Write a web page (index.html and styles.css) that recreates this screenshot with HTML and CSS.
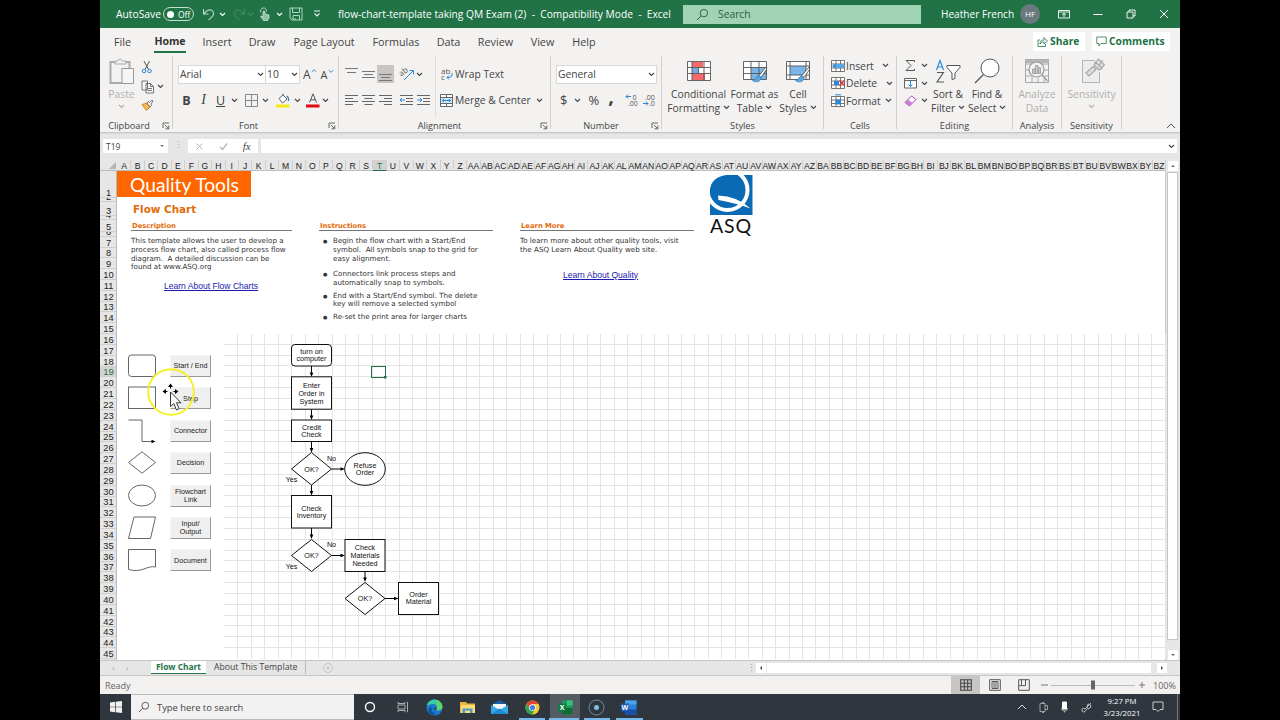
FILE: index.html
```html
<!DOCTYPE html>
<html lang="en">
<head>
  <meta charset="UTF-8">
  <meta name="viewport" content="width=device-width, initial-scale=1.0">
  <title>flow-chart-template taking QM Exam (2) - Excel</title>
  <link rel="stylesheet" href="styles.css">
</head>
<body>
  <svg class="defs" width="0" height="0">
    <symbol id="chev" viewBox="0 0 7 5"><path d="M1 1l2.500 2.500L6 1" fill="none" stroke="currentColor" stroke-width="1.100"/></symbol>
    <symbol id="launch" viewBox="0 0 8 8"><path d="M1 6V1h6M3 3l3.500 3.500M6.800 3.500v3.300H3.500" fill="none" stroke="#555" stroke-width=".9"/></symbol>
    <symbol id="lens" viewBox="0 0 14 14"><circle cx="8.500" cy="5.500" r="4" fill="none" stroke="currentColor"/><path d="M5.500 8.500L1 13" stroke="currentColor"/></symbol>
    <symbol id="brush" viewBox="0 0 16 18"><path d="M15.500 1L8.500 9.500l2 2L16.300 3z" fill="#fff" stroke="#444" stroke-width=".8"/><path d="M8.200 9.800c-3 .3-2.500 4-6.200 4.700 3 2.500 8.500 1.500 8.500-2.700z" fill="#5ba7e0" stroke="#2b7cc0" stroke-width=".7"/></symbol>
  </svg>

  <div class="screen">
    <!-- Title bar -->
    <div class="titlebar">
      <span class="autosave">AutoSave</span>
      <span class="toggle"><i></i>Off</span>
      <svg class="undo" width="14" height="14" viewBox="0 0 14 14"><path d="M1.500 2v5h5M1.800 6.800C5 2.500 9 1.800 11 4.500c2 3-1 5.500-4.500 8.500" fill="none" stroke="#b9ddc8" stroke-width="1.100"/></svg>
      <svg class="chev c1"><use href="#chev"/></svg>
      <svg class="redo" width="14" height="14" viewBox="0 0 14 14"><path d="M12.500 2v5h-5M12.200 6.800C9 2.500 5 1.800 3 4.500c-2 3 1 5.500 4.500 8.500" fill="none" stroke="#3f8a60" stroke-width="1.100"/></svg>
      <svg class="chev c2"><use href="#chev"/></svg>
      <svg class="touch" width="12" height="14" viewBox="0 0 12 14"><path d="M2 5.500a3 3 0 1 1 5.500-1" fill="none" stroke="#a9d3ba"/><path d="M4 9V4.500q1-1.200 2 0V7l4 1v3l-1.500 2.500h-4L1.500 9.500q1-1 2.500.5z" fill="#8bc2a1" stroke="#d5eadd" stroke-width=".7"/></svg>
      <svg class="chev c3"><use href="#chev"/></svg>
      <svg class="save" width="14" height="14" viewBox="0 0 14 14"><path d="M1 1h12v12H3l-2-2zM3.500 1v4.500h7V1M4 13V8.500h6.500V13M6 11v2" fill="none" stroke="#a9d9bb"/></svg>
      <svg class="more" width="8" height="8" viewBox="0 0 8 8"><path d="M1 1h6M1.500 3.500L4 6l2.500-2.500" fill="none" stroke="#e5f3ea" stroke-width="1.100"/></svg>
      <span class="doc-title">flow-chart-template taking QM Exam (2)&nbsp; -&nbsp; Compatibility Mode&nbsp; -&nbsp; Excel</span>
      <div class="search"><svg width="13" height="13"><use href="#lens"/></svg>Search</div>
      <span class="user">Heather French</span>
      <span class="avatar">HF</span>
      <svg class="win w1" width="12" height="10" viewBox="0 0 12 10"><path d="M.5 1.500h11v7.500H.5zM.5 3h11M6 8V4.500M4 6l2-1.700L8 6" fill="none" stroke="#fff" stroke-width=".9"/></svg>
      <svg class="win w2" width="10" height="10" viewBox="0 0 10 10"><path d="M.5 5.500h9" stroke="#fff"/></svg>
      <svg class="win w3" width="10" height="10" viewBox="0 0 10 10"><path d="M1 3h6v6H1zM3 3V1h6v6H7" fill="none" stroke="#fff" stroke-width=".9"/></svg>
      <svg class="win w4" width="10" height="10" viewBox="0 0 10 10"><path d="M1 1l8 8M9 1L1 9" stroke="#fff"/></svg>
    </div>

    <!-- Ribbon tabs -->
    <div class="tabs">
      <span>File</span><span class="active"><b>Home</b></span><span>Insert</span><span>Draw</span><span>Page Layout</span>
      <span>Formulas</span><span>Data</span><span>Review</span><span>View</span><span>Help</span>
      <div class="tab-btn share"><svg width="11" height="11" viewBox="0 0 11 11"><path d="M3 4H1v6.500h7.500V8M3 8c0-3 1.500-4 4-4V1.500L10.500 5 7 8V6C5 6 4 6.500 3 8z" fill="none" stroke="#217346" stroke-width=".8"/></svg>Share</div>
      <div class="tab-btn comments"><svg width="11" height="11" viewBox="0 0 11 11"><path d="M.8 1h9.400v6.500H5L2.800 10V7.500h-2z" fill="none" stroke="#217346" stroke-width=".8"/></svg>Comments</div>
    </div>

    <!-- Ribbon -->
    <div class="ribbon">
      <div class="group g-clip">
        <div class="body">
          <div class="big disabled paste">
            <svg width="26" height="28" viewBox="0 0 26 28"><path d="M6 4H1.500v21H13M17 4h3.500v6" fill="none" stroke="#aaa" stroke-width="2"/><path d="M6 6V3h3q2-4 4 0h4v3z" fill="#f3f2f1" stroke="#aaa"/><path d="M13 10.500h11.500v15H13z" fill="#f5f5f5" stroke="#999"/></svg>
            <span>Paste</span><svg class="chev"><use href="#chev"/></svg>
          </div>
          <div class="stack clip-stack">
            <svg width="12" height="14" viewBox="0 0 12 14"><path d="M3 1l4.500 8.500M8.500 1L4 9.500" stroke="#555" fill="none"/><circle cx="3" cy="11" r="1.800" fill="none" stroke="#2b88d8"/><circle cx="8.500" cy="11" r="1.800" fill="none" stroke="#2b88d8"/></svg>
            <div><svg width="14" height="14" viewBox="0 0 14 14"><path d="M1 1h5.500v9H1zM5 3.500h4.500l3 3V13H5zM9.500 3.500v3h3M7 8.500h4M7 10.500h4" fill="#f8f8f8" stroke="#666" stroke-width=".9"/></svg><svg class="chev"><use href="#chev"/></svg></div>
            <svg width="13" height="12" viewBox="0 0 13 12"><path d="M1 5.500l5-1.500 3 4-3.500 3.500z" fill="#f5b95c" stroke="#d98a1e"/><path d="M6 4l1-1.500 1.500 1L11 1l1 1-2 3 .5 1.500L9 8z" fill="#fff" stroke="#555" stroke-width=".8"/></svg>
          </div>
        </div>
        <div class="label"><span>Clipboard</span><svg class="launch"><use href="#launch"/></svg></div>
      </div>

      <div class="group g-font">
        <div class="rows">
          <div class="row">
            <div class="combo font-name">Arial<svg class="chev"><use href="#chev"/></svg></div>
            <div class="combo font-size">10<svg class="chev"><use href="#chev"/></svg></div>
            <span class="grow">A<svg class="chev up"><use href="#chev"/></svg></span>
            <span class="shrink">A<svg class="chev"><use href="#chev"/></svg></span>
          </div>
          <div class="row font-row">
            <b>B</b><i>I</i><u>U</u><svg class="chev"><use href="#chev"/></svg>
            <svg class="ml" width="13" height="13" viewBox="0 0 13 13"><path d="M.5.5h12v12H.5zM6.500.5v12M.5 6.500h12" fill="none" stroke="#888"/></svg><svg class="chev"><use href="#chev"/></svg>
            <svg class="ml fill" width="14" height="15" viewBox="0 0 14 15"><path d="M3 5.500L7 2l4 4-4.500 4zM7 2V.5" fill="#fff" stroke="#666"/><path d="M10.500 3q2.500 1 2 5" stroke="#2b7cc0" fill="none" stroke-width="1.300"/><path d="M0 11.500h13.500v3H0z" fill="#f5ea14"/></svg><svg class="chev"><use href="#chev"/></svg>
            <svg class="ml2" width="14" height="15" viewBox="0 0 14 15"><path d="M3.500 9.500L7 .8l3.500 8.700M4.700 6.800h4.600" stroke="#555" fill="none"/><path d="M0 11.500h13.500v3H0z" fill="#e00b0b"/></svg><svg class="chev"><use href="#chev"/></svg>
          </div>
        </div>
        <div class="label"><span>Font</span><svg class="launch"><use href="#launch"/></svg></div>
      </div>

      <div class="group g-align">
        <div class="align-body">
          <div class="rows align-left">
            <div class="row">
              <svg class="ab" viewBox="0 0 17 18"><path d="M2 3.500h13M4 7.500h9" stroke="#777" fill="none"/></svg>
              <svg class="ab" viewBox="0 0 17 18"><path d="M2 6.500h13M4 9.500h9M2 12.500h13" stroke="#777"/></svg>
              <svg class="ab on" viewBox="0 0 17 18"><path d="M2 9.500h13M4 12.500h9M2 15.500h13" stroke="#777"/></svg>
              <svg class="orient" width="16" height="16" viewBox="0 0 16 16"><path d="M5 14L14 5M10.500 4.500h4v4" stroke="#2b88d8" fill="none"/><text x="1" y="9" font-size="8" transform="rotate(-38 4 8)">ab</text></svg>
              <svg class="chev"><use href="#chev"/></svg>
            </div>
            <div class="row">
              <svg class="ab" viewBox="0 0 17 18"><path d="M2 4.500h13M2 7.500h8M2 10.500h13M2 13.500h8" stroke="#666"/></svg>
              <svg class="ab" viewBox="0 0 17 18"><path d="M2 4.500h13M4.500 7.500h8M2 10.500h13M4.500 13.500h8" stroke="#666"/></svg>
              <svg class="ab" viewBox="0 0 17 18"><path d="M2 4.500h13M7 7.500h8M2 10.500h13M7 13.500h8" stroke="#666"/></svg>
              <svg class="ab ind" viewBox="0 0 17 18"><path d="M2 4.500h13M8 7.500h7M8 10.500h7M2 13.500h13" stroke="#666"/><path d="M7 9H2m2-2L2 9l2 2" stroke="#2b88d8" fill="none"/></svg>
              <svg class="ab" viewBox="0 0 17 18"><path d="M2 4.500h13M8 7.500h7M8 10.500h7M2 13.500h13" stroke="#666"/><path d="M2 9h5m-2-2l2 2-2 2" stroke="#2b88d8" fill="none"/></svg>
            </div>
          </div>
          <div class="rows align-right">
            <div class="row"><svg class="wrap" width="13" height="14" viewBox="0 0 13 14"><text x="1" y="7" font-size="8">ab</text><text x="1" y="13" font-size="8">c</text><path d="M12 6q1 5-5 4.500m2-2l-2 2 2 2" stroke="#2b88d8" fill="none"/></svg>Wrap Text</div>
            <div class="row"><svg width="13" height="13" viewBox="0 0 13 13"><path d="M.5.5h12v12H.5zM.5 3.500h12M.5 9.500h12M6.500.5v3M6.500 9.500v3" fill="#fff" stroke="#666"/><path d="M1 4h11v5H1z" fill="#cfe6f8"/><path d="M2 6.500h9M4 5L2.500 6.500 4 8M9 5l1.500 1.500L9 8" fill="none" stroke="#2b88d8"/></svg>Merge &amp; Center<svg class="chev"><use href="#chev"/></svg></div>
          </div>
        </div>
        <div class="label"><span>Alignment</span><svg class="launch"><use href="#launch"/></svg></div>
      </div>

      <div class="group g-num">
        <div class="rows">
          <div class="row"><div class="combo general">General<svg class="chev"><use href="#chev"/></svg></div></div>
          <div class="row num-row">
            <span>$</span><svg class="chev"><use href="#chev"/></svg><span>%</span><span class="comma">,</span>
            <svg width="14" height="14" viewBox="0 0 14 14"><text x="7.500" y="6.500" font-size="7">0</text><text x="3" y="13" font-size="7">.00</text><path d="M6 3.500H1m2-2l-2 2 2 2" stroke="#2b88d8" fill="none"/></svg>
            <svg width="14" height="14" viewBox="0 0 14 14"><text x="3" y="6.500" font-size="7">.00</text><text x="7" y="13" font-size="7">.0</text><path d="M1 10.500h5m-2-2l2 2-2 2" stroke="#2b88d8" fill="none"/></svg>
          </div>
        </div>
        <div class="label"><span>Number</span><svg class="launch"><use href="#launch"/></svg></div>
      </div>

      <div class="group g-styles">
        <div class="body">
          <div class="big cond">
            <svg width="26" height="26" viewBox="0 0 26 26"><path d="M1.500 3.500h23v19h-23z" fill="#fff"/><path d="M6 4h11v5.500H6zM6 16h13v6H6z" fill="#f5696b"/><path d="M6 10h6v5.500H6z" fill="#71aee6"/><path d="M1.500 3.500h23v19h-23zM1.500 9.500h23M1.500 15.500h23M6 3.500v19M12.500 9.500v6M18 3.500v19" fill="none" stroke="#555" stroke-width=".9"/></svg>
            <span>Conditional<br>Formatting <svg class="chev"><use href="#chev"/></svg></span>
          </div>
          <div class="big fmt">
            <svg width="26" height="26" viewBox="0 0 26 26"><path d="M1.500 3.500h23v18h-23z" fill="#fff"/><path d="M9 9.500h15.500v12H9z" fill="#7ab6ea"/><path d="M1.500 3.500h23v18h-23zM1.500 9.500h23M1.500 15.500h23M9 3.500v18M17 3.500v18" fill="none" stroke="#555" stroke-width=".9"/><use href="#brush" x="7" y="8" width="19" height="18"/></svg>
            <span>Format as<br>Table <svg class="chev"><use href="#chev"/></svg></span>
          </div>
          <div class="big cell">
            <svg width="26" height="26" viewBox="0 0 26 26"><path d="M1.500 3.500h23v18h-23z" fill="#fff"/><path d="M5 8h16v9H5z" fill="#7ab6ea"/><path d="M1.500 3.500h23v18h-23zM1.500 8h23M1.500 17h23M5 3.500v18M21 3.500v18" fill="none" stroke="#555" stroke-width=".9"/><use href="#brush" x="7" y="8" width="19" height="18"/></svg>
            <span>Cell<br>Styles <svg class="chev"><use href="#chev"/></svg></span>
          </div>
        </div>
        <div class="label"><span>Styles</span></div>
      </div>

      <div class="group g-cells">
        <div class="stack">
          <div><svg width="14" height="12" viewBox="0 0 14 12"><path d="M.5.5h13v11H.5zM.5 4h13M.5 8h13M5 .5v11M9.500.5v11" fill="#fff" stroke="#666" stroke-width=".9"/><path d="M3 4h10.500v4H3z" fill="#58a7e4"/><path d="M4.500 3.500L1 6l3.500 2.500" fill="#2b88d8"/></svg>Insert<svg class="chev"><use href="#chev"/></svg></div>
          <div><svg width="14" height="12" viewBox="0 0 14 12"><path d="M.5.5h13v11H.5zM.5 4h13M.5 8h13M5 .5v11M9.500.5v11" fill="#fff" stroke="#666" stroke-width=".9"/><path d="M3 4h5v4H3z" fill="#2b88d8"/><path d="M8.500 3.500l5 5M13.500 3.500l-5 5" stroke="#d13438" stroke-width="1.200"/></svg>Delete<svg class="chev far"><use href="#chev"/></svg></div>
          <div><svg width="14" height="13" viewBox="0 0 14 13"><path d="M.5 2.500h13v10H.5zM.5 6h13M.5 9.500h13M5 2.500v10M9.500 2.500v10" fill="#fff" stroke="#666" stroke-width=".9"/><path d="M4.500 5.500h5.500v5H4.500z" fill="#2b88d8"/><path d="M4 .8h6" stroke="#2b88d8"/></svg>Format<svg class="chev near"><use href="#chev"/></svg></div>
        </div>
        <div class="label"><span>Cells</span></div>
      </div>

      <div class="group g-edit">
        <div class="body">
          <div class="stack edit-stack">
            <div><svg width="13" height="13" viewBox="0 0 13 13"><path d="M10.500 3V1.500H2L7 6.500 2 11.500h8.500V10" fill="none" stroke="#555"/></svg><svg class="chev"><use href="#chev"/></svg></div>
            <div><svg width="13" height="12" viewBox="0 0 13 12"><path d="M.5 1.500h12v9.500H.5zM.5 3.500h12" fill="#fff" stroke="#666"/><path d="M6.500 4v5.500m-2-2l2 2 2-2" fill="none" stroke="#2b88d8"/></svg><svg class="chev"><use href="#chev"/></svg></div>
            <div><svg width="13" height="12" viewBox="0 0 13 12"><path d="M1 7.500L7.500 1l4.500 3.500L5.500 11z" fill="#fff" stroke="#a33fb5"/><path d="M1 7.500L4 4.500l4.500 3.500-3 3z" fill="#c97fd4"/></svg><svg class="chev"><use href="#chev"/></svg></div>
          </div>
          <div class="big sort">
            <svg width="26" height="26" viewBox="0 0 26 26"><path d="M1.500 12L5 2.500 8.500 12M2.700 9h4.700" fill="none" stroke="#2b88d8" stroke-width="1.200"/><path d="M2 14.500h6.500L2 24h7" fill="none" stroke="#555" stroke-width="1.100"/><path d="M12 7.500h13v2l-5 5.500v5.500l-3 1V15l-5-5.500z" fill="#fff" stroke="#555"/></svg>
            <span>Sort &amp;<br>Filter <svg class="chev"><use href="#chev"/></svg></span>
          </div>
          <div class="big find">
            <svg width="26" height="26" viewBox="0 0 26 26"><circle cx="16" cy="10" r="9" fill="#fff" stroke="#555"/><path d="M9.500 16.500L1 25" stroke="#555" stroke-width="1.200"/></svg>
            <span>Find &amp;<br>Select <svg class="chev"><use href="#chev"/></svg></span>
          </div>
        </div>
        <div class="label"><span>Editing</span></div>
      </div>

      <div class="group g-analysis">
        <div class="body centered">
          <div class="big disabled">
            <svg width="26" height="26" viewBox="0 0 26 26"><path d="M1.500 1.500h23v23h-23zM1.500 6h23M1.500 12h4M1.500 18h6M20 12h4.500M20 18h4.500M8 19v5M14 20v4M20 21v3" fill="none" stroke="#a6a6a6"/><path d="M1.500 1.500h23V5h-23z" fill="#b5b5b5"/><circle cx="12.500" cy="11.500" r="7.500" fill="#f3f2f1" stroke="#999" stroke-width="1.200"/><path d="M8.500 11h2.500v4.500H8.500zM11.500 7.500H14v8h-2.500zM14.500 9.500h2v6h-2z" fill="#ccc" stroke="#999" stroke-width=".8"/><path d="M18 17l5.500 6" stroke="#999" stroke-width="1.500"/></svg>
            <span>Analyze<br>Data</span>
          </div>
        </div>
        <div class="label"><span>Analysis</span></div>
      </div>

      <div class="group g-sens">
        <div class="body centered">
          <div class="big disabled">
            <svg width="26" height="26" viewBox="0 0 26 26"><path d="M16 2.500H3.500v22h17V14" fill="#ececec" stroke="#b5b5b5"/><path d="M7 15l7-6.500 3 3-7 6.500zM15 7l5 5 3-1.500-6.500-6.500zM17 4l2.500-3 6 6-3 2.500M20 7l4-5" fill="#ddd" stroke="#a6a6a6" stroke-width="1.100"/></svg>
            <span>Sensitivity</span><svg class="chev"><use href="#chev"/></svg>
          </div>
        </div>
        <div class="label"><span>Sensitivity</span></div>
      </div>
      <svg class="collapse" width="10" height="6" viewBox="0 0 10 6"><path d="M1 5l4-4 4 4" fill="none" stroke="#555"/></svg>
    </div>

    <!-- Formula bar -->
    <div class="formula">
      <div class="namebox">T19<span class="tri"></span></div>
      <span class="dots">⋮</span>
      <div class="fx">
        <svg width="9" height="9" viewBox="0 0 9 9"><path d="M1.500 1.500l6 6M7.500 1.500l-6 6" stroke="#b5b5b5"/></svg>
        <svg width="9" height="9" viewBox="0 0 9 9"><path d="M1 5l2.500 2.500L8 1.500" fill="none" stroke="#b5b5b5" stroke-width="1.300"/></svg>
        <i>fx</i>
      </div>
      <div class="input"><svg class="chev"><use href="#chev"/></svg></div>
    </div>

    <!-- Worksheet -->
    <div class="sheet">
      <div class="left">
        <div class="col-heads"><span class="corner"></span><div class="cols" id="cols"></div></div>
        <div class="main">
          <div class="row-heads" id="rows"></div>
          <div class="canvas">
            <div class="info">
              <div class="text">
                <div class="banner">Quality Tools</div>
                <h1>Flow Chart</h1>
                <div class="columns">
                  <section>
                    <h2>Description</h2>
                    <p>This template allows the user to develop a<br>process flow chart, also called process flow<br>diagram.&nbsp; A detailed discussion can be<br>found at www.ASQ.org</p>
                    <a class="link-charts">Learn About Flow Charts</a>
                  </section>
                  <section>
                    <h2>Instructions</h2>
                    <ul>
                      <li>Begin the flow chart with a Start/End<br>symbol.&nbsp; All symbols snap to the grid for<br>easy alignment.</li>
                      <li>Connectors link process steps and<br>automatically snap to symbols.</li>
                      <li>End with a Start/End symbol. The delete<br>key will remove a selected symbol</li>
                      <li>Re-set the print area for larger charts</li>
                    </ul>
                  </section>
                  <section>
                    <h2>Learn More</h2>
                    <p>To learn more about other quality tools, visit<br>the ASQ Learn About Quality web site.</p>
                    <a class="link-quality">Learn About Quality</a>
                  </section>
                </div>
              </div>
              <div class="logo">
                <svg width="44" height="41" viewBox="0 0 44 41"><path d="M1 0h42.500v40H1z" fill="#0a6ab4"/><path d="M0 0h17Q3 2 1 14H0z" fill="#fff"/><circle cx="18.500" cy="15" r="20" fill="none" stroke="#fff" stroke-width="4"/><path d="M9 20.500Q28 21 41.500 33.500 27 28 9.500 25z" fill="#fff"/></svg>
                <span>ASQ</span>
              </div>
            </div>

            <div class="work">
              <div class="palette">
                <svg viewBox="0 0 28 24"><rect x=".5" y="1" width="27" height="21.500" rx="3"/></svg><button>Start / End</button>
                <svg viewBox="0 0 28 24"><rect x=".5" y="1" width="27" height="21.500"/></svg><button>Step</button>
                <svg viewBox="0 0 28 24"><path d="M.5 1H14v21.500h10"/><path class="tip" d="M23.500 20.700l4 1.800-4 1.800z"/></svg><button>Connector</button>
                <svg viewBox="0 0 28 24"><path d="M.5 11.500L14 .8l13.500 10.700L14 22.200z"/></svg><button>Decision</button>
                <svg viewBox="0 0 28 24"><ellipse cx="14" cy="11.500" rx="13.500" ry="10.500"/></svg><button>Flowchart<br>Link</button>
                <svg viewBox="0 0 28 24"><path d="M6 1h21.500l-5 21.500H.5z"/></svg><button>Input/<br>Output</button>
                <svg viewBox="0 0 28 24"><path d="M.5 1.500h27V19C19 17 14 25.500.5 21.500z"/></svg><button>Document</button>
              </div>
              <svg class="chart" viewBox="224 334 942 325" width="942" height="325">
                <g id="grid"></g>
                <g class="wires">
                  <path d="M311.500 366v7M311.500 409.500v7M311.500 441.500v7M311.500 485v7M311.500 528v7M331.500 469h10M331.500 555.500h10M365 571.500v7M385 598.500h10"/>
                </g>
                <g class="heads">
                  <path d="M309.700 372.500h3.600l-1.800 4.500zM309.700 415.500h3.600l-1.800 4.500zM309.700 448h3.600l-1.800 4.500zM309.700 491h3.600l-1.800 4.500zM309.700 534.500h3.600l-1.800 4.500zM340.500 467.200v3.600l4.500-1.800zM340.500 553.700v3.600l4.500-1.800zM363.200 577.500h3.600l-1.800 4.500zM394 596.700v3.600l4.500-1.800z"/>
                </g>
                <g class="nodes">
                  <rect x="291.500" y="344.500" width="40" height="21.500" rx="3.500"/>
                  <rect x="291.500" y="376.800" width="40" height="32.400"/>
                  <rect x="291.500" y="420" width="40" height="21.500"/>
                  <path d="M291.500 469l20-16.500 20 16.500-20 16z"/>
                  <ellipse cx="365" cy="469" rx="20.300" ry="16.300"/>
                  <rect x="291.500" y="495.500" width="40" height="32.500"/>
                  <path d="M291.500 555.500l20-16 20 16-20 16z"/>
                  <rect x="345" y="539.500" width="40" height="32"/>
                  <path d="M345 598.500l20-16 20 16-20 16z"/>
                  <rect x="398.500" y="582.500" width="40" height="32"/>
                </g>
                <g class="texts">
                  <text x="311.500" y="354">turn on</text><text x="311.500" y="361">computer</text>
                  <text x="311.500" y="388">Enter</text><text x="311.500" y="396">Order in</text><text x="311.500" y="404">System</text>
                  <text x="311.500" y="429.500">Credit</text><text x="311.500" y="437">Check</text>
                  <text x="311.500" y="471.500">OK?</text>
                  <text x="331.500" y="460.500">No</text><text x="291.500" y="482">Yes</text>
                  <text x="365" y="467.500">Refuse</text><text x="365" y="474.500">Order</text>
                  <text x="311.500" y="510.500">Check</text><text x="311.500" y="517.500">Inventory</text>
                  <text x="311.500" y="558">OK?</text>
                  <text x="331.500" y="547">No</text><text x="291.500" y="568.500">Yes</text>
                  <text x="365" y="550">Check</text><text x="365" y="558">Materials</text><text x="365" y="566">Needed</text>
                  <text x="365" y="601">OK?</text>
                  <text x="418.500" y="597">Order</text><text x="418.500" y="604">Material</text>
                </g>
                <rect x="371.500" y="366.500" width="14" height="11" fill="none" stroke="#217346"/>
                <rect x="384" y="376" width="2.500" height="2.500" fill="#217346"/>
              </svg>
            </div>

            <svg class="pointer" width="48" height="48" viewBox="147 368 48 48">
              <circle cx="171" cy="392" r="22.800" fill="none" stroke="#f5f02a" stroke-width="2"/>
              <path d="M163 391.500h15M170.500 384v14" stroke="#000" stroke-dasharray="4.500 6"/>
              <path d="M168 387l2.500-3.500L173 387zM166 389v5l-3.500-2.500zM175 389v5l3.500-2.500z" fill="#000"/>
              <path d="M170.500 392v14.500l3.300-3 2.700 6.500 2.700-1.200-2.700-6h4.500z" fill="#fff" stroke="#222" stroke-width=".9"/>
            </svg>
          </div>
        </div>
      </div>
      <div class="vscroll"><span class="arrow"><i class="up-tri"></i></span><div class="thumb"></div><span class="arrow"><i class="down"></i></span></div>
    </div>

    <!-- Sheet tabs -->
    <div class="sheet-tabs">
      <span class="nav">‹</span><span class="nav">›</span>
      <span class="stab active">Flow Chart</span>
      <span class="stab">About This Template</span>
      <svg class="add" width="10" height="10" viewBox="0 0 10 10"><circle cx="5" cy="5" r="4.500" fill="none" stroke="#bbb" stroke-width=".8"/><path d="M5 3v4M3 5h4" stroke="#bbb" stroke-width=".8"/></svg>
      <span class="grip">⋮</span>
      <div class="hscroll"><span class="arrow"><i class="lt"></i></span><div class="thumb"></div><span class="arrow"><i class="rt"></i></span></div>
    </div>

    <!-- Status bar -->
    <div class="status">
      <span class="ready">Ready</span>
      <span class="view on"><svg width="12" height="12" viewBox="0 0 12 12"><path d="M.7.7h10.600v10.600H.7zM.7 4.300h10.600M.7 7.700h10.600M4.300.7v10.600M7.700.7v10.600" fill="none" stroke="#444" stroke-width="1.100"/></svg></span>
      <span class="view"><svg width="12" height="12" viewBox="0 0 12 12"><path d="M.7.7h10.600v10.600H.7zM3 2.500h6v7H3zM4 4h4M4 6h4M4 8h4" fill="none" stroke="#555"/></svg></span>
      <span class="view"><svg width="12" height="12" viewBox="0 0 12 12"><path d="M.7.7h10.600v10.600H.7zM3.500.7v6M7.500.7v6M.7 6.700h6.800" fill="none" stroke="#555"/></svg></span>
      <div class="zoom"><svg width="104" height="12" viewBox="0 0 104 12"><path d="M0 6h7" stroke="#777"/><path d="M10 6.500h84" stroke="#bbb"/><path d="M98 6h6M101 3v6" stroke="#777"/><path d="M50 1.500h4v9h-4z" fill="#666"/></svg></div>
      <span class="pct">100%</span>
    </div>

    <!-- Windows taskbar -->
    <div class="taskbar">
      <span class="start"><svg width="12" height="12" viewBox="0 0 12 12"><path d="M0 1.500l5-.7v4.900H0zM5.700.7L12 0v5.700H5.700zM0 6.300h5v4.900l-5-.7zM5.700 6.300H12V12l-6.300-.8z" fill="#f2f2f2"/></svg></span>
      <div class="tsearch"><svg width="12" height="12"><use href="#lens"/></svg>Type here to search</div>
      <span class="app"><svg width="12" height="12" viewBox="0 0 12 12"><circle cx="6" cy="6" r="4.500" fill="none" stroke="#fff" stroke-width="1.400"/></svg></span>
      <span class="app"><svg width="12" height="12" viewBox="0 0 12 12"><path d="M1 .8v1.700h7V.8M1 4h7v4H1zM1 11.200V9.500h7v1.700M10.500.8v10.400" fill="none" stroke="#bbb" stroke-width=".9"/></svg></span>
      <span class="app"><svg width="17" height="17" viewBox="0 0 17 17"><circle cx="8.500" cy="8.500" r="8" fill="#1b78cc"/><path d="M.7 7C2-1 14-2 16.400 7c.5 4-3.400 5-6 4 2-3-.4-6-3.400-6C4 5 2 6 .7 7z" fill="#3cc9a8"/><path d="M10 1c6 1 7.500 7 5.500 9-2 1.500-4 1.300-5.100 1C12 8 11 4 10 1z" fill="#5dd765"/><path d="M6 8q-2 5 4 7-5 2-7.500-2Q2 8 6 8z" fill="#14539c"/><path d="M10.400 11q-2.400 0-2.600-2.500Q10 8 10.400 11z" fill="#2f353c"/></svg></span>
      <span class="app"><svg width="15" height="13" viewBox="0 0 15 13"><path d="M0 1h6l1.500 1.500H15V12H0z" fill="#e9b53a"/><path d="M1 4h14v8H1z" fill="#ffdc78"/><path d="M2.500 12V7.500h10V12H10V9.500H5V12z" fill="#4a9bc9"/></svg></span>
      <span class="app"><svg width="17" height="14" viewBox="0 0 17 14"><path d="M0 5l8.500-5L17 5z" fill="#155fa6"/><path d="M2 4h13v7H2z" fill="#f5f5f5"/><path d="M0 5l8.500 5L17 5v9H0z" fill="#35a9e8"/><path d="M0 14l8.500-5.500L17 14z" fill="#1d8bd4"/></svg></span>
      <span class="app run"><svg width="15" height="15" viewBox="0 0 15 15"><circle cx="7.500" cy="7.500" r="7" fill="#f8c832"/><path d="M1.400 4A7 7 0 0 1 13.600 4H7.500L5 9z" fill="#e34537"/><path d="M1.400 4A7 7 0 0 0 7 14.500l3-5.500-5 0z" fill="#30a354"/><circle cx="7.500" cy="7.500" r="3.300" fill="#fff"/><circle cx="7.500" cy="7.500" r="2.600" fill="#3f80ec"/></svg></span>
      <span class="app run current"><svg width="16" height="15" viewBox="0 0 16 15"><path d="M5 .5h10.500v14H5z" fill="#1f9c5a"/><path d="M10 .5h5.500v5H10z" fill="#34c481"/><path d="M5 8h10.500v6.500H5z" fill="#14693b"/><path d="M1 3.500h8v8H1z" fill="#0f7a40"/><text x="2.800" y="10" font-size="7" class="tile">X</text></svg></span>
      <span class="app run rec"><svg width="17" height="17" viewBox="0 0 17 17"><circle cx="8.500" cy="8.500" r="7.500" fill="none" stroke="#6c8ea4"/><circle cx="8.500" cy="8.500" r="2.500" fill="#82bde6"/></svg></span>
      <span class="app run"><svg width="16" height="15" viewBox="0 0 16 15"><path d="M4 .5h11.500v14H4z" fill="#2a82d9"/><path d="M4 .5h11.500v4H4z" fill="#47a5ee"/><path d="M4 9.500h11.500v5H4z" fill="#164fa8"/><path d="M0 3.500h8v8H0z" fill="#1c5ab8"/><text x=".6" y="10" font-size="7" class="tile">W</text></svg></span>
      <div class="tray">
        <svg width="10" height="6" viewBox="0 0 10 6"><path d="M1 5l4-4 4 4" fill="none" stroke="#ddd"/></svg>
        <svg width="9" height="11" viewBox="0 0 9 11"><path d="M1 1.500h5v8H1zM6 3.500h2.500v4H6M3 .5h2M3 10.500h2" fill="none" stroke="#aaa" stroke-width=".9"/></svg>
        <svg width="9" height="12" viewBox="0 0 9 12"><rect x="2" y=".5" width="5" height="8" rx="1" fill="#fff"/><path d="M1.500 7q0 3 3 3t3-3M4.500 10v1.500" fill="none" stroke="#ccc" stroke-width=".8"/></svg>
        <svg width="11" height="11" viewBox="0 0 11 11"><path d="M10 1L4 7M7 2q3 0 3 3L7 7q-2-1 0-5zM4 7q-3-2-3 1t3 1.500L6 7" fill="none" stroke="#ccc" stroke-width=".9"/></svg>
      </div>
      <div class="clock">9:27 PM<br>3/23/2021</div>
      <svg class="notify" width="12" height="12" viewBox="0 0 12 12"><path d="M1 1h10v7.500H8L6 10.500 4 8.500H1z" fill="none" stroke="#ccc"/></svg>
      <span class="peek"></span>
    </div>
  </div>

  <script>
    // Column headers A..BZ
    const colWidth = 13.44;
    const rowHeight = 10.83;
    const cols = document.getElementById('cols');
    for (let i = 0; i < 78; i++) {
      const first = i < 26 ? '' : String.fromCharCode(64 + Math.floor(i / 26));
      const cell = document.createElement('span');
      cell.textContent = first + String.fromCharCode(65 + i % 26);
      if (cell.textContent === 'T') cell.className = 'sel';
      cols.appendChild(cell);
    }

    // Row headers, the first six have their own heights
    const heights = [26.5, 4.5, 13.5, 4, 12, 5.2];
    const rows = document.getElementById('rows');
    for (let r = 1; r <= 45; r++) {
      const cell = document.createElement('span');
      const label = document.createElement('b');
      label.textContent = r;
      cell.appendChild(label);
      cell.style.height = (heights[r - 1] || rowHeight) + 'px';
      if (r === 19) cell.className = 'sel';
      rows.appendChild(cell);
    }

    // Grid lines
    let d = '';
    for (let c = 9; c <= 78; c++) {
      d += 'M' + (Math.round(117.5 + c * colWidth) - 0.5) + ' 334V659';
    }
    for (let r = 1; r <= 29; r++) {
      d += 'M224 ' + (Math.round(334 + r * rowHeight) - 0.5) + 'H1166';
    }
    document.getElementById('grid').innerHTML = '<path d="' + d + '"/>';
  </script>
</body>
</html>
```
FILE: styles.css
```css
* {
  box-sizing: border-box;
}

body {
  margin: 0;
  background: #000;
  font-family: "Open Sans", "Noto Sans", sans-serif;
  font-size: 10.3px;
  color: #444;
}

svg {
  display: block;
  flex: none;
}

svg text {
  fill: #555;
}

.defs {
  position: absolute;
}

.screen {
  width: 1080px;
  height: 720px;
  margin: 0 auto;
  display: flex;
  flex-direction: column;
  overflow: hidden;
  white-space: nowrap;
  background: #e6e6e6;
}

.chev {
  width: 7px;
  height: 5px;
}

/* Title bar */
.titlebar {
  height: 28px;
  flex: none;
  display: flex;
  align-items: center;
  padding-left: 16px;
  background: #217346;
  color: #fff;
}

.autosave {
  width: 47px;
}

.toggle {
  width: 31px;
  height: 14px;
  border: 1px solid #c5e0d0;
  border-radius: 8px;
  display: flex;
  align-items: center;
  gap: 4px;
  padding-left: 3px;
  font-size: 8.5px;
}

.toggle i {
  width: 7px;
  height: 7px;
  border-radius: 50%;
  background: #fff;
}

.undo { margin-left: 8px; }
.redo { margin-left: 6px; }
.touch { margin-left: 5px; }
.save { margin-left: 6px; }
.more { margin-left: 10px; }
.c1 { margin-left: 3px; }
.c2 { margin-left: 1px; color: #3f8a60; }
.c3 { margin-left: 5px; }

.doc-title {
  width: 345px;
  margin-left: 17px;
  font-size: 10.2px;
}

.search {
  width: 238px;
  height: 19px;
  display: flex;
  align-items: center;
  gap: 9px;
  padding-left: 13px;
  background: #9fd3b4;
  color: #2b5f43;
}

.user {
  width: 72px;
  margin-left: 20px;
  font-size: 10.1px;
}

.avatar {
  width: 20px;
  height: 20px;
  margin-left: 7px;
  border-radius: 50%;
  background: #69797e;
  font-size: 8px;
  line-height: 20px;
  text-align: center;
}

.w1 { margin-left: 18px; }
.w2 { margin-left: 23px; }
.w3 { margin-left: 23px; }
.w4 { margin-left: 23px; }

/* Ribbon tabs */
.tabs {
  height: 28px;
  flex: none;
  display: grid;
  grid-template-columns: 31px 64px 30px 60px 64px 80px 25px 69px 25px 58px 472px 7px 78px;
  align-items: center;
  justify-items: center;
  padding: 0 0 2px 7px;
  background: #f3f2f1;
  font-size: 10.8px;
}

.tabs .active b {
  display: block;
  height: 21px;
  line-height: 18px;
  margin-top: 3px;
  border-bottom: 2px solid #217346;
  color: #333;
  font-size: 10.5px;
}

.tab-btn {
  height: 19px;
  display: flex;
  align-items: center;
  gap: 2px;
  background: #fff;
  color: #217346;
  font-weight: bold;
  font-size: 10.3px;
}

.share {
  width: 52px;
  padding-left: 4px;
  justify-self: end;
}

.comments {
  width: 78px;
  grid-column: 13;
  padding-left: 4px;
}

/* Ribbon */
.ribbon {
  height: 77px;
  flex: none;
  display: flex;
  background: #f3f2f1;
  border-bottom: 1px solid #c8c8c8;
}

.group {
  position: relative;
  display: flex;
  flex-direction: column;
  border-right: 1px solid #d2d0ce;
  height: 73px;
}

.g-clip { width: 73px; }
.g-font { width: 166px; }
.g-align { width: 212px; }
.g-num { width: 111px; }
.g-styles { width: 162px; }
.g-cells { width: 73px; }
.g-edit { width: 116px; }
.g-analysis { width: 49px; }
.g-sens { width: 60px; }

.label {
  height: 13px;
  margin-top: auto;
  margin-bottom: -3px;
  display: flex;
  align-items: center;
  font-size: 9.2px;
}

.label span {
  flex: 1;
  text-align: center;
}

.launch {
  width: 8px;
  height: 8px;
  margin-right: 2px;
}

.g-clip .label span {
  padding-right: 4px;
}

.g-font .label span {
  padding-right: 4px;
}

.g-num .label span {
  padding-left: -2px;
}

.body {
  display: flex;
}

.centered {
  justify-content: center;
}

.big {
  display: flex;
  flex-direction: column;
  align-items: center;
  text-align: center;
  padding-top: 2px;
  line-height: 14px;
}

.big span {
  margin-top: 3px;
}

.big span .chev {
  display: inline-block;
  vertical-align: 2px;
}

.disabled {
  color: #b1afad;
}

.paste {
  width: 43px;
}

.paste span {
  margin-top: 1px;
}

.paste .chev,
.g-sens .chev {
  margin-top: 3px;
}

.stack {
  display: flex;
  flex-direction: column;
  gap: .5px;
  padding-top: 1px;
}

.stack div {
  height: 17px;
  display: flex;
  align-items: center;
}

.clip-stack {
  gap: 1px;
  padding-top: 4px;
  margin-left: -2px;
}

.clip-stack div {
  gap: 2px;
  height: 23px;
}

.rows {
  display: flex;
  flex-direction: column;
  gap: 8px;
  padding-top: 9px;
}

.row {
  height: 18px;
  display: flex;
  align-items: center;
}

.combo {
  height: 19px;
  display: flex;
  align-items: center;
  justify-content: space-between;
  padding: 0 1px;
  background: #fff;
  border: 1px solid #dad8d6;
}

.g-font .rows {
  padding-left: 5px;
}

.font-name { width: 88px; }
.font-size { width: 34px; border-left: 0; }
.general { width: 101px; margin-left: 5px; }

.grow,
.shrink {
  display: flex;
  margin-left: 3px;
  font-size: 12px;
}

.shrink {
  margin-left: 4px;
  font-size: 11px;
}

.grow .chev,
.shrink .chev {
  margin-top: 2px;
  width: 6px;
  color: #2b7cc0;
}

.up {
  transform: rotate(180deg);
}

.font-row b,
.font-row i,
.font-row u {
  width: 17px;
  text-align: center;
  font-size: 12.5px;
}

.font-row i {
  font-family: "Liberation Serif", serif;
  font-size: 14px;
}

.font-row > .chev {
  margin: 0 2px;
}

.font-row .ml { margin-left: 5px; }
.font-row .ml + .chev { margin-left: 4px; }
.font-row .ml2 { margin-left: 3px; }

.align-body {
  display: flex;
}

.align-left {
  width: 97px;
  padding-left: 4px;
  border-right: 1px solid #e1dfdd;
  height: 62px;
}

.ab {
  width: 17px;
  height: 18px;
}

.ab.on {
  background: #c8c6c4;
}

.ab.ind { margin-left: 4px; }
.orient { margin-left: 5px; }
.orient + .chev { margin-left: 1px; }

.wrap {
  overflow: visible;
}

.align-right {
  padding-left: 4px;
}

.align-right .row {
  gap: 2px;
}

.align-right .chev {
  margin-left: 3px;
}

.num-row {
  padding-left: 9px;
  font-size: 13px;
}

.num-row svg {
  overflow: visible;
}

.num-row .chev { margin: 0 7px 0 7px; }
.num-row .comma { font-size: 20px; font-weight: bold; margin: -10px 11px 0 9px; }
.num-row svg + svg { margin-left: 3px; }

.cond { width: 73px; }
.fmt { width: 40px; }
.cell { width: 46px; }
.fmt span { margin-left: -1px; }

.g-cells .stack {
  padding-left: 7px;
}

.g-cells .stack div {
  gap: 1px;
}

.g-cells .chev { margin-left: 7px; }
.g-cells .chev.far { margin-left: 8px; }
.g-cells .chev.near { margin-left: 3px; }

.edit-stack {
  width: 32px;
  padding-left: 7px;
}

.edit-stack div {
  gap: 4px;
}

.sort { width: 38px; }
.find { width: 40px; }

.collapse {
  margin: 67px 0 0 44px;
}

/* Formula bar */
.formula {
  height: 27px;
  flex: none;
  display: flex;
  padding: 5px 3px 7px;
  font-size: 8.5px;
  border-top: 1px solid #d9d9d9;
}

.namebox {
  width: 65px;
  background: #fff;
  display: flex;
  align-items: center;
  justify-content: space-between;
  padding: 0 4px 0 3px;
}

.tri {
  border: 2px solid transparent;
  border-top-color: #777;
  border-bottom: 0;
}

.dots {
  width: 20px;
  text-align: center;
  color: #aaa;
}

.fx {
  width: 70px;
  background: #fff;
  display: flex;
  align-items: center;
  justify-content: space-around;
  font-family: "Liberation Serif", serif;
  font-size: 11px;
}

.input {
  flex: 1;
  margin-left: 3px;
  padding-right: 2px;
  background: #fff;
  display: flex;
  align-items: center;
  justify-content: flex-end;
}

/* Worksheet */
.sheet {
  height: 500px;
  flex: none;
  display: flex;
}

.left {
  width: 1066px;
  flex: none;
}

.col-heads {
  height: 11px;
  display: flex;
  border-bottom: 1px solid #bbb;
}

.corner {
  width: 18px;
  flex: none;
  display: flex;
  justify-content: flex-end;
  align-items: flex-end;
}

.corner::after {
  content: "";
  margin: 1px 2px;
  border-left: 7px solid transparent;
  border-bottom: 7px solid #b5b5b5;
}

.cols {
  display: grid;
  grid-template-columns: repeat(78, 13.44px);
  font: 8.6px/12.5px "Liberation Sans", sans-serif;
  color: #222;
}

.cols span {
  height: 11px;
  display: flex;
  justify-content: center;
  border-right: 1px solid #cfcfcf;
}

.cols .sel {
  background: #d2d2d2;
  color: #217346;
  border-bottom: 1px solid #217346;
}

.main {
  height: 489px;
  display: flex;
}

.row-heads {
  width: 17px;
  flex: none;
  border-right: 1px solid #bbb;
  font: 9.3px/10px "Liberation Sans", sans-serif;
  color: #222;
}

.row-heads span {
  display: flex;
  justify-content: center;
  align-items: flex-end;
  overflow: hidden;
  padding-left: 1px;
  border-bottom: 1px solid #cfcfcf;
}

.row-heads b {
  font-weight: normal;
  margin-bottom: -1px;
}

.row-heads .sel {
  background: #d2d2d2;
  color: #217346;
}

.canvas {
  position: relative;
  width: 1049px;
  flex: none;
  background: #fff;
  border-right: 1px solid #c8c8c8;
}

.info {
  height: 163px;
  display: flex;
}

.text {
  width: 577px;
}

.banner {
  width: 134px;
  height: 26px;
  padding-left: 13px;
  background: #ff6600;
  color: #fff;
  font: 19.2px/28px Lato, sans-serif;
}

.info h1 {
  margin: 5px 0 0 16px;
  height: 14px;
  font: bold 10.4px/15px "DejaVu Sans", sans-serif;
  color: #e26b0a;
}

.columns {
  display: grid;
  grid-template-columns: 161px 174px 174px;
  column-gap: 27px;
  padding: 5px 0 0 14px;
  font: 7.17px/8.75px "DejaVu Sans", sans-serif;
  color: #333;
}

.columns h2 {
  margin: 0 0 6px;
  height: 10px;
  padding-left: 1px;
  border-bottom: 1px solid #777;
  font: bold 6.8px/10px "DejaVu Sans", sans-serif;
  color: #e26b0a;
}

.columns p {
  margin: 0;
}

.columns ul {
  margin: 0;
  padding: 0 0 0 14px;
  list-style: none;
}

.columns li {
  display: block;
  margin-bottom: 4.3px;
}

.columns li:first-child {
  margin-bottom: 6.5px;
}

.columns li::before {
  content: "●";
  float: left;
  width: 10px;
  margin-left: -10px;
  font-size: 5px;
}

.columns a {
  display: block;
  font: 8.55px/10px "Liberation Sans", sans-serif;
  color: #1a1ab0;
  text-decoration: underline;
}

.link-charts { margin: 9px 0 0 33px; }
.link-quality { margin: 15px 0 0 43px; }

.logo {
  margin: 4px 0 0 15px;
}

.logo span {
  display: block;
  font: 19.5px/20px Lato, sans-serif;
  letter-spacing: .8px;
  color: #111;
  margin: 0 0 0 1px;
}

.work {
  display: flex;
}

.palette {
  width: 107px;
  flex: none;
  height: 245px;
  display: grid;
  grid-template-columns: 28px 41px;
  grid-auto-rows: 22px;
  column-gap: 14px;
  row-gap: 10.4px;
  padding: 21px 0 0 11px;
}

.palette svg {
  width: 28px;
  height: 24px;
  margin-top: -1px;
  overflow: visible;
  fill: #fff;
  stroke: #666;
}

.palette path,
.palette ellipse {
  fill: none;
}

.palette .tip {
  fill: #000;
  stroke: none;
}

.palette button {
  padding: 0;
  border: 1px solid #f5f5f5;
  border-right-color: #999;
  border-bottom-color: #999;
  background: #efefef;
  font: 7.2px/7.5px "Liberation Sans", sans-serif;
  color: #222;
  white-space: nowrap;
}

#grid path {
  stroke: #e4e4e4;
}

.wires path {
  stroke: #000;
}

.nodes > * {
  fill: #fff;
  stroke: #111;
  stroke-width: 1;
}

.texts text {
  font: 7.2px "Liberation Sans", sans-serif;
  text-anchor: middle;
  fill: #111;
}

.pointer {
  position: absolute;
  left: 30px;
  top: 197px;
}

.vscroll {
  width: 14px;
  padding: 1px 2px 0 1px;
  display: flex;
  flex-direction: column;
}

.arrow {
  width: 10px;
  height: 10px;
  flex: none;
  display: flex;
  align-items: center;
  justify-content: center;
  background: #fff;
}

.arrow i {
  border: 2.5px solid transparent;
}

.arrow .up-tri { border-bottom-color: #666; border-top: 0; }
.arrow .down { border-top-color: #666; border-bottom: 0; }
.arrow .lt { border-right-color: #444; border-left: 0; }
.arrow .rt { border-left-color: #444; border-right: 0; }

.vscroll .arrow {
  margin-left: 1px;
}

.vscroll .thumb {
  height: 468px;
  margin: 1px 0 10px;
  width: 11px;
  background: #fff;
  border: 1px solid #c5c5c5;
}

/* Sheet tabs */
.sheet-tabs {
  height: 16px;
  flex: none;
  display: flex;
  align-items: center;
  padding: 0 0 1px 12px;
  border-top: 1px solid #c6c6c6;
  border-bottom: 1px solid #c6c6c6;
  font-size: 8.7px;
}

.nav {
  width: 14px;
  color: #aaa;
}

.stab {
  height: 13px;
  line-height: 12px;
  padding: 0 8px;
  border-right: 1px solid #bbb;
}

.stab.active {
  width: 55px;
  margin-left: 11px;
  padding: 0;
  text-align: center;
  background: #fff;
  color: #217346;
  font-weight: bold;
  font-size: 8.4px;
  border-right: 0;
  border-bottom: 1px solid #217346;
}

.add {
  margin-left: 17px;
}

.grip {
  margin-left: auto;
  width: 9px;
  color: #999;
}

.hscroll {
  width: 412px;
  display: flex;
  margin-right: 12px;
}

.hscroll .thumb {
  width: 384px;
  height: 10px;
  margin: 0 6px 0 1px;
  background: #fff;
}

/* Status bar */
.status {
  height: 18px;
  flex: none;
  display: flex;
  align-items: center;
  padding-left: 5px;
  background: #f3f1f0;
  font-size: 9px;
  color: #666;
}

.ready {
  width: 846px;
}

.view {
  width: 29px;
  height: 18px;
  display: flex;
  align-items: center;
  justify-content: center;
}

.view.on {
  background: #c8c6c4;
}

.zoom {
  margin-left: 3px;
}

.pct {
  margin-left: 8px;
}

/* Taskbar */
.taskbar {
  height: 26px;
  flex: none;
  display: flex;
  align-items: center;
  background: #2f363e;
  color: #fff;
}

.start {
  width: 31px;
  display: flex;
  justify-content: center;
}

.tsearch {
  width: 223px;
  height: 26px;
  display: flex;
  align-items: center;
  gap: 7px;
  padding-left: 7px;
  background: #f2f2f2;
  border: 1px solid #bbb;
  border-width: 1px 0;
  color: #444;
  font-size: 9.4px;
}

.app {
  width: 32.4px;
  height: 26px;
  display: flex;
  align-items: center;
  justify-content: center;
}

.run {
  position: relative;
}

.run::after {
  content: "";
  position: absolute;
  left: 3px;
  right: 3px;
  bottom: 0;
  height: 2px;
  background: #76b9ed;
}

.current {
  background: linear-gradient(#555c61, #555c61) center / 30px 26px no-repeat;
}

.current::after {
  left: 1px;
  right: 2px;
}

.tile {
  font-weight: bold;
  fill: #fff;
}

.tray {
  display: flex;
  align-items: center;
  gap: 12px;
  margin-left: auto;
}

.clock {
  width: 44px;
  margin-left: 8px;
  text-align: center;
  font-size: 7.8px;
  line-height: 12px;
}

.notify {
  margin-left: 8px;
}

.peek {
  width: 3px;
  height: 26px;
  margin-left: 13px;
  border-left: 1px solid #777;
}
```
